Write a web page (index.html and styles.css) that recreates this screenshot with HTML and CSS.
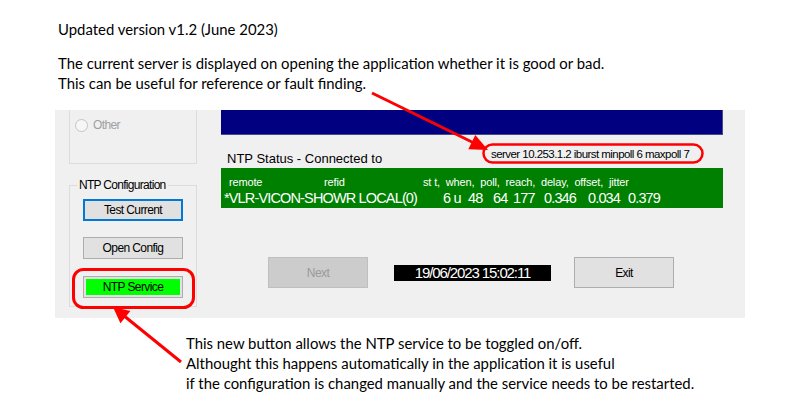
FILE: index.html
```html
<!DOCTYPE html>
<html>
<head>
<meta charset="utf-8">
<title>NTP tool - v1.2 notes</title>
<link rel="stylesheet" href="styles.css">
</head>
<body>
<div class="page">
  <div class="notes-top">
    <p class="title">Updated version v1.2 (June 2023)</p>
    <p class="para">The current server is displayed on opening the application whether it is good or bad.<br>This can be useful for reference or fault finding.</p>
  </div>

  <div class="app">
    <div class="left">
      <div class="group-cut">
        <div class="radio"><span class="circle"></span><span class="radio-label">Other</span></div>
      </div>
      <div class="config">
        <span class="legend">NTP Configuration</span>
        <div class="btn focus">Test Current</div>
        <div class="btn open">Open Config</div>
        <div class="btn service"><span class="service-fill">NTP Service</span></div>
      </div>
    </div>

    <div class="right">
      <div class="bluebar"></div>
      <div class="status-row">
        <span class="status">NTP Status - Connected to</span>
        <span class="server">server 10.253.1.2 iburst minpoll 6 maxpoll 7</span>
      </div>
      <div class="peers">
        <div class="peer-head">
          <span class="h-remote">remote</span><span class="h-refid">refid</span><span class="h-rest">st t,&nbsp; when,&nbsp; poll,&nbsp; reach,&nbsp; delay,&nbsp; offset,&nbsp; jitter</span>
        </div>
        <div class="peer-row">
          <span class="c-name">*VLR-VICON-SHOWR LOCAL(0)</span><span class="c-st">6 u</span><span class="c-when">48</span><span class="c-poll">64</span><span class="c-reach">177</span><span class="c-delay">0.346</span><span class="c-offset">0.034</span><span class="c-jitter">0.379</span>
        </div>
      </div>
      <div class="actions">
        <div class="btn big disabled">Next</div>
        <div class="clock">19/06/2023 15:02:11</div>
        <div class="btn big exit">Exit</div>
      </div>
    </div>
  </div>

  <div class="notes-bottom">
    <p class="para">This new button allows the NTP service to be toggled on/off.<br>Althought this happens automatically in the application it is useful<br>if the configuration is changed manually and the service needs to be restarted.</p>
  </div>

  <svg class="annot" width="799" height="409" viewBox="0 0 799 409" xmlns="http://www.w3.org/2000/svg">
    <rect x="483.5" y="144.5" width="219" height="18" rx="9" fill="none" stroke="#ff0000" stroke-width="2.5"/>
    <rect x="73.5" y="269.5" width="120" height="38" rx="10" fill="none" stroke="#ff0000" stroke-width="3"/>
    <line x1="372" y1="93" x2="474" y2="143" stroke="#ff0000" stroke-width="3"/>
    <polygon points="488,150 475.3,134.9 468.3,149.3" fill="#ff0000"/>
    <line x1="181" y1="362" x2="123" y2="315" stroke="#ff0000" stroke-width="3"/>
    <polygon points="113,307 130.4,310.9 120.4,323.3" fill="#ff0000"/>
  </svg>
</div>
</body>
</html>
```

FILE: styles.css
```css
html, body {
  margin: 0;
  padding: 0;
  background: #ffffff;
}

.page {
  position: relative;
  width: 799px;
  height: 409px;
  overflow: hidden;
  font-family: Lato, "Open Sans", sans-serif;
  color: #000;
}

.para, .title {
  margin: 0;
  font-size: 14.9px;
  line-height: 20px;
}

.notes-top {
  padding: 19px 0 0 58px;
}

.title {
  margin-bottom: 14px;
}

.app {
  margin-top: 17px;
  margin-left: 55px;
  width: 690px;
  height: 208px;
  background: #f0f0f0;
  display: flex;
  font-family: "Liberation Sans", Arial, sans-serif;
  font-size: 12px;
  letter-spacing: -0.6px;
}

.left {
  margin-left: 14px;
  width: 128px;
  display: flex;
  flex-direction: column;
}

.group-cut {
  height: 54px;
  box-sizing: border-box;
  border: 1px solid #dcdcdc;
  border-top: none;
  padding: 8px 0 0 5px;
}

.radio {
  display: flex;
  align-items: center;
  gap: 5px;
  color: #a0a0a0;
  line-height: 14px;
}

.circle {
  width: 11px;
  height: 11px;
  border: 1px solid #c4c4c4;
  border-radius: 50%;
  background: #f6f6f6;
}

.config {
  position: relative;
  margin-top: 21px;
  height: 122px;
  box-sizing: border-box;
  border: 1px solid #dcdcdc;
  padding: 13px 0 0 13px;
  display: flex;
  flex-direction: column;
  align-items: flex-start;
}

.legend {
  position: absolute;
  top: -8px;
  left: 7px;
  padding: 0 2px;
  background: #f0f0f0;
  letter-spacing: -0.7px;
  line-height: 14px;
  color: #000;
}

.btn {
  box-sizing: border-box;
  width: 100px;
  height: 22px;
  border: 1px solid #adadad;
  background: #e1e1e1;
  display: flex;
  align-items: center;
  justify-content: center;
  color: #000;
  line-height: 14px;
}

.btn.focus {
  border: 2px solid #0078d7;
}

.btn.open {
  margin-top: 16px;
}

.btn.service {
  margin-top: 17px;
  padding: 2px;
}

.service-fill {
  flex: 1;
  align-self: stretch;
  background: #00ff00;
  display: flex;
  align-items: center;
  justify-content: center;
}

.right {
  margin-left: 24px;
  width: 502px;
  display: flex;
  flex-direction: column;
}

.bluebar {
  height: 25px;
  box-sizing: border-box;
  background: #000080;
  border-right: 1px solid #4a4a8a;
  border-bottom: 1px solid #4a4a8a;
}

.status-row {
  height: 33px;
  display: flex;
  align-items: flex-end;
}

.status {
  margin-left: 6px;
  width: 264px;
  font-size: 13px;
  letter-spacing: 0;
  line-height: 15px;
  padding-bottom: 2px;
}

.server {
  font-size: 11.5px;
  letter-spacing: -0.55px;
  line-height: 14px;
  margin-bottom: 7px;
}

.peers {
  height: 40px;
  background: #008000;
  color: #ffffff;
}

.peer-head {
  display: flex;
  padding: 7px 0 0 8px;
  font-size: 11px;
  letter-spacing: -0.15px;
  line-height: 14px;
  white-space: nowrap;
}

.h-remote { width: 95px; }
.h-refid { width: 99px; }

.peer-row {
  display: flex;
  padding-left: 3px;
  font-size: 14.5px;
  letter-spacing: -0.85px;
  line-height: 18px;
  white-space: nowrap;
}

.c-name { width: 219px; }
.c-st { width: 25px; }
.c-when { width: 25px; }
.c-poll { width: 20px; }
.c-reach { width: 31px; }
.c-delay { width: 44px; }
.c-offset { width: 40px; }

.actions {
  margin-top: 49px;
  padding-left: 47px;
  display: flex;
  align-items: center;
}

.btn.big {
  height: 31px;
}

.btn.disabled {
  background: #cccccc;
  border-color: #bfbfbf;
  color: #9a9a9a;
}

.clock {
  margin-left: 26px;
  width: 157px;
  height: 16px;
  background: #000000;
  color: #ffffff;
  font-size: 15px;
  letter-spacing: -1.1px;
  line-height: 16px;
  text-align: center;
}

.btn.exit {
  margin-left: 23px;
}

.notes-bottom {
  margin-top: 15px;
  padding-left: 186px;
}

.annot {
  position: absolute;
  top: 0;
  left: 0;
  pointer-events: none;
}
```
